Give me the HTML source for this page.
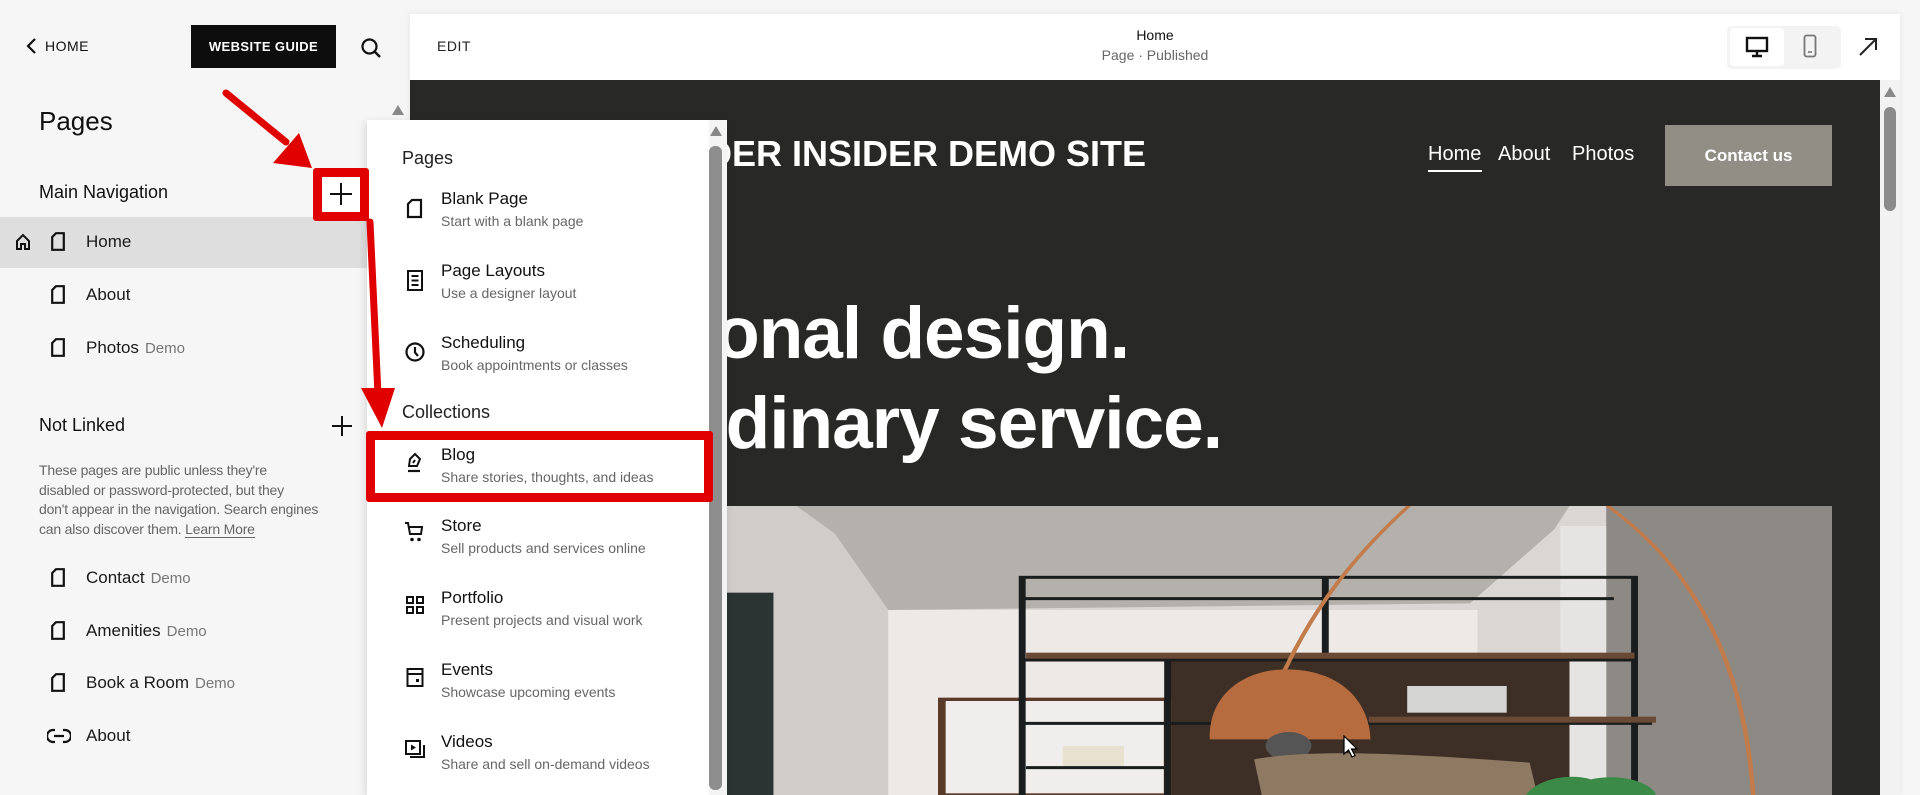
<!DOCTYPE html>
<html><head><meta charset="utf-8">
<style>
*{margin:0;padding:0;box-sizing:border-box}
body{width:1920px;height:795px;overflow:hidden;background:#f6f6f6;font-family:"Liberation Sans",sans-serif;position:relative;color:#111}
.a{position:absolute;white-space:nowrap}
.side-t{font-size:17px;color:#1a1a1a}
.demo{font-size:15px;color:#777;margin-left:6px}
.pg{position:absolute;width:14px;height:19px}
.mt{font-size:17px;color:#111}
.md{font-size:14px;color:#666;margin-top:4px}
.mi{position:absolute;left:441px}
.ic{position:absolute;left:404px;width:22px;height:22px}
</style></head><body>

<!-- sidebar -->
<svg class="a" style="left:25px;top:37px" width="12" height="18" viewBox="0 0 12 18"><path d="M10 2 L3 9 L10 16" fill="none" stroke="#111" stroke-width="2.2"/></svg>
<div class="a" style="left:45px;top:38px;font-size:14px;letter-spacing:.5px;color:#111">HOME</div>
<div class="a" style="left:191px;top:25px;width:145px;height:43px;background:#0d0d0d;color:#fff;font-size:13px;font-weight:bold;letter-spacing:.4px;line-height:43px;text-align:center">WEBSITE GUIDE</div>
<svg class="a" style="left:360px;top:37px" width="22" height="22" viewBox="0 0 22 22"><circle cx="9.5" cy="9.5" r="7" fill="none" stroke="#111" stroke-width="2.2"/><path d="M14.5 14.5 L20 20" stroke="#111" stroke-width="2.4"/></svg>
<div class="a" style="left:39px;top:106px;font-size:26px;color:#111">Pages</div>
<div class="a" style="left:39px;top:182px;font-size:18px;color:#111">Main Navigation</div>
<div class="a" style="left:0;top:217px;width:370px;height:51px;background:#dedede"></div>
<svg class="a" style="left:15px;top:233px" width="16" height="18" viewBox="0 0 16 18"><path d="M2 8 L8 2 L14 8 V16 H10 V11 H6 V16 H2 Z" fill="none" stroke="#111" stroke-width="2"/></svg>

<svg class="pg" style="left:51px;top:232px" viewBox="0 0 14 19"><path d="M1.2 5 L5 1.2 H12.8 V17.8 H1.2 Z" fill="none" stroke="#111" stroke-width="2.2"/></svg>
<div class="a side-t" style="left:86px;top:232px">Home</div>
<svg class="pg" style="left:51px;top:285px" viewBox="0 0 14 19"><path d="M1.2 5 L5 1.2 H12.8 V17.8 H1.2 Z" fill="none" stroke="#111" stroke-width="2.2"/></svg>
<div class="a side-t" style="left:86px;top:285px">About</div>
<svg class="pg" style="left:51px;top:338px" viewBox="0 0 14 19"><path d="M1.2 5 L5 1.2 H12.8 V17.8 H1.2 Z" fill="none" stroke="#111" stroke-width="2.2"/></svg>
<div class="a side-t" style="left:86px;top:338px">Photos<span class="demo">Demo</span></div>

<div class="a" style="left:39px;top:415px;font-size:18px;color:#111">Not Linked</div>
<svg class="a" style="left:331px;top:415px" width="22" height="22" viewBox="0 0 22 22"><path d="M11 1V21M1 11H21" stroke="#111" stroke-width="2"/></svg>
<div class="a" style="left:39px;top:461px;font-size:14px;line-height:19.5px;color:#666;letter-spacing:-0.2px">These pages are public unless they're<br>disabled or password-protected, but they<br>don't appear in the navigation. Search engines<br>can also discover them. <span style="border-bottom:1px solid #666">Learn More</span></div>

<svg class="pg" style="left:51px;top:568px" viewBox="0 0 14 19"><path d="M1.2 5 L5 1.2 H12.8 V17.8 H1.2 Z" fill="none" stroke="#111" stroke-width="2.2"/></svg>
<div class="a side-t" style="left:86px;top:568px">Contact<span class="demo">Demo</span></div>
<svg class="pg" style="left:51px;top:621px" viewBox="0 0 14 19"><path d="M1.2 5 L5 1.2 H12.8 V17.8 H1.2 Z" fill="none" stroke="#111" stroke-width="2.2"/></svg>
<div class="a side-t" style="left:86px;top:621px">Amenities<span class="demo">Demo</span></div>
<svg class="pg" style="left:51px;top:673px" viewBox="0 0 14 19"><path d="M1.2 5 L5 1.2 H12.8 V17.8 H1.2 Z" fill="none" stroke="#111" stroke-width="2.2"/></svg>
<div class="a side-t" style="left:86px;top:673px">Book a Room<span class="demo">Demo</span></div>
<svg class="a" style="left:47px;top:727px" width="24" height="18" viewBox="0 0 24 18"><path d="M8 3 H6 A6 6 0 0 0 6 15 H8 M16 3 H18 A6 6 0 0 1 18 15 H16 M7 9 H17" fill="none" stroke="#111" stroke-width="2.2"/></svg>
<div class="a side-t" style="left:86px;top:726px">About</div>

<svg class="a" style="left:391px;top:104px" width="14" height="12" viewBox="0 0 14 12"><path d="M7 1 L13 11 H1 Z" fill="#888"/></svg>

<!-- preview panel -->
<div class="a" style="left:410px;top:14px;width:1490px;height:781px;background:#fff;box-shadow:0 0 6px rgba(0,0,0,.08)"></div>
<div class="a" style="left:437px;top:38px;font-size:14px;letter-spacing:.5px;color:#222">EDIT</div>
<div class="a" style="left:1055px;top:27px;width:200px;text-align:center;font-size:14px;color:#111">Home</div>
<div class="a" style="left:1055px;top:47px;width:200px;text-align:center;font-size:14px;color:#666">Page · Published</div>
<div class="a" style="left:1727px;top:26px;width:114px;height:43px;background:#f3f3f3;border-radius:5px"></div>
<div class="a" style="left:1730px;top:28px;width:54px;height:38px;background:#fff;border-radius:4px"></div>
<svg class="a" style="left:1745px;top:36px" width="24" height="22" viewBox="0 0 24 22"><rect x="2" y="2" width="20" height="13" fill="none" stroke="#111" stroke-width="2.4"/><path d="M12 15V19M7 20H17" stroke="#111" stroke-width="2.4"/></svg>
<svg class="a" style="left:1803px;top:34px" width="14" height="24" viewBox="0 0 14 24"><rect x="1.5" y="1.5" width="11" height="21" rx="2" fill="none" stroke="#777" stroke-width="1.8"/><path d="M5 18H9" stroke="#777" stroke-width="1.6"/></svg>
<svg class="a" style="left:1858px;top:37px" width="20" height="20" viewBox="0 0 20 20"><path d="M2 18 L18 2 M7 2 H18 V13" fill="none" stroke="#222" stroke-width="2"/></svg>

<div class="a" style="left:410px;top:80px;width:1470px;height:715px;background:#282826;overflow:hidden">
  <div class="a" style="right:734px;top:53px;font-size:36px;font-weight:bold;color:#fff">SPLENDER INSIDER DEMO SITE</div>
  <div class="a" style="left:1018px;top:63px;font-size:20px;color:#fff">Home</div>
  <div class="a" style="left:1018px;top:90px;width:54px;height:2px;background:#fff"></div>
  <div class="a" style="left:1088px;top:63px;font-size:20px;color:#fff">About</div>
  <div class="a" style="left:1162px;top:63px;font-size:20px;color:#fff">Photos</div>
  <div class="a" style="left:1255px;top:45px;width:167px;height:61px;background:#918e86;color:#fff;font-weight:bold;font-size:17px;text-align:center;line-height:61px">Contact us</div>
  <div class="a" style="right:751px;top:212px;font-size:73px;font-weight:bold;color:#fff;letter-spacing:-1px">Exceptional design.</div>
  <div class="a" style="right:658px;top:302px;font-size:73px;font-weight:bold;color:#fff;letter-spacing:-1px">Extraordinary service.</div>
  <svg class="a" style="left:316px;top:426px" width="1106" height="289" viewBox="0 0 1445 867" preserveAspectRatio="none">
    <rect width="1445" height="867" fill="#d9d6d3"/>
    <rect x="0" y="0" width="212" height="867" fill="#cfccc9"/>
    <rect x="0" y="260" width="62" height="607" fill="#2b3433"/>
    <polygon points="92,0 1102,0 1082,70 972,292 212,312 142,82" fill="#b4b0ab"/>
    <rect x="212" y="312" width="770" height="555" fill="#ece9e6"/>
    <rect x="1150" y="0" width="295" height="867" fill="#8d8985"/>
    <rect x="1090" y="60" width="60" height="807" fill="#e6e4e2"/>
    <rect x="577" y="462" width="525" height="405" fill="#3e2f26"/>
    <rect x="282" y="580" width="295" height="287" fill="#f0eeec" stroke="#5a3b2a" stroke-width="10"/>
    <g fill="none" stroke="#1a1d1d" stroke-width="9">
      <rect x="387" y="214" width="800" height="700"/>
      <path d="M387 278 H1160 M783 214 V462 M387 462 H1187 M387 652 H1210 M577 462 V867 M392 785 H577"/>
    </g>
    <rect x="392" y="440" width="795" height="18" fill="#6b4a35"/>
    <rect x="840" y="632" width="375" height="18" fill="#6b4a35"/>
    <rect x="890" y="540" width="130" height="80" fill="#d5d5d3"/>
    <path d="M892 0 C820 150 770 300 730 492" fill="none" stroke="#c27b4b" stroke-width="6"/>
    <path d="M1152 0 C1260 180 1330 450 1342 867" fill="none" stroke="#c27b4b" stroke-width="6"/>
    <path d="M632 700 C630 560 680 490 732 490 C800 490 840 580 842 700 Z" fill="#b66c3f"/>
    <ellipse cx="735" cy="720" rx="30" ry="42" fill="#555"/>
    <path d="M690 760 C760 730 880 740 1050 770 L1060 867 H700 Z" fill="#8e7a63"/>
    <path d="M1045 867 C1060 820 1100 800 1130 820 C1170 800 1210 830 1215 867 Z" fill="#3c8a48"/>
    <rect x="440" y="720" width="80" height="60" fill="#e8e1cf"/>
  </svg>
</div>
<!-- main scrollbar -->
<div class="a" style="left:1880px;top:80px;width:20px;height:715px;background:#f2f2f2"></div>
<svg class="a" style="left:1883px;top:86px" width="14" height="12" viewBox="0 0 14 12"><path d="M7 1 L13 11 H1 Z" fill="#888"/></svg>
<div class="a" style="left:1884px;top:107px;width:12px;height:104px;background:#8b8b8b;border-radius:6px"></div>

<!-- dropdown -->
<div class="a" style="left:367px;top:120px;width:360px;height:675px;background:#fff;box-shadow:-2px 2px 8px rgba(0,0,0,.12)"></div>
<div class="a" style="left:709px;top:120px;width:18px;height:675px;background:#f4f4f4"></div>
<svg class="a" style="left:709px;top:125px" width="14" height="12" viewBox="0 0 14 12"><path d="M7 1 L13 11 H1 Z" fill="#888"/></svg>
<div class="a" style="left:709px;top:146px;width:13px;height:644px;background:#8e8e8e;border-radius:6px"></div>
<div class="a" style="left:402px;top:148px;font-size:18px;color:#222">Pages</div>
<div class="a" style="left:402px;top:402px;font-size:18px;color:#222">Collections</div>

<svg class="ic" style="top:197px" viewBox="0 0 22 22"><path d="M4 7 L8 3 H17 V20 H4 Z" fill="none" stroke="#111" stroke-width="2.2"/></svg>
<div class="mi" style="top:189px"><div class="mt">Blank Page</div><div class="md">Start with a blank page</div></div>
<svg class="ic" style="top:269px" viewBox="0 0 22 22"><rect x="4" y="2" width="14" height="19" fill="none" stroke="#111" stroke-width="2"/><path d="M7.5 7H14.5M7.5 11.5H14.5M7.5 16H14.5" stroke="#111" stroke-width="2"/></svg>
<div class="mi" style="top:261px"><div class="mt">Page Layouts</div><div class="md">Use a designer layout</div></div>
<svg class="ic" style="top:341px" viewBox="0 0 22 22"><circle cx="11" cy="11" r="8.5" fill="none" stroke="#111" stroke-width="2.2"/><path d="M11 6V11.5L14 15" fill="none" stroke="#111" stroke-width="2.2"/></svg>
<div class="mi" style="top:333px"><div class="mt">Scheduling</div><div class="md">Book appointments or classes</div></div>
<svg class="ic" style="top:451px" viewBox="0 0 22 22"><path d="M5 15 L6 8 L11 3 L16 8 L13 15 Z M9 12 L11 9" fill="none" stroke="#111" stroke-width="2"/><path d="M4 20H16" stroke="#111" stroke-width="2.2"/></svg>
<div class="mi" style="top:445px"><div class="mt">Blog</div><div class="md">Share stories, thoughts, and ideas</div></div>
<svg class="ic" style="top:521px" viewBox="0 0 22 22"><path d="M1 2 H4 L6 13 H17 L18 6 H5" fill="none" stroke="#111" stroke-width="2"/><circle cx="8" cy="18.5" r="1.8" fill="#111"/><circle cx="15" cy="18.5" r="1.8" fill="#111"/></svg>
<div class="mi" style="top:516px"><div class="mt">Store</div><div class="md">Sell products and services online</div></div>
<svg class="ic" style="top:594px" viewBox="0 0 22 22"><g fill="none" stroke="#111" stroke-width="2"><rect x="3" y="3" width="6" height="6"/><rect x="13" y="3" width="6" height="6"/><rect x="3" y="13" width="6" height="6"/><rect x="13" y="13" width="6" height="6"/></g></svg>
<div class="mi" style="top:588px"><div class="mt">Portfolio</div><div class="md">Present projects and visual work</div></div>
<svg class="ic" style="top:666px" viewBox="0 0 22 22"><rect x="3.5" y="3" width="15" height="17" fill="none" stroke="#111" stroke-width="2"/><path d="M3.5 8H18.5" stroke="#111" stroke-width="2"/><rect x="12" y="13" width="3" height="3" fill="#111"/></svg>
<div class="mi" style="top:660px"><div class="mt">Events</div><div class="md">Showcase upcoming events</div></div>
<svg class="ic" style="top:738px" viewBox="0 0 22 22"><rect x="2" y="3" width="14" height="13" fill="none" stroke="#111" stroke-width="2"/><path d="M6 19H20V7" fill="none" stroke="#111" stroke-width="2"/><path d="M7 6.5L12 9.5L7 12.5Z" fill="#111"/></svg>
<div class="mi" style="top:732px"><div class="mt">Videos</div><div class="md">Share and sell on-demand videos</div></div>

<!-- red boxes -->
<div class="a" style="left:366px;top:431px;width:347px;height:71px;border:9px solid #e00000;border-radius:3px"></div>
<div class="a" style="left:313px;top:168px;width:56px;height:53px;border:9px solid #e00000;border-radius:3px;background:#fff"></div>
<svg class="a" style="left:328px;top:181px" width="26" height="26" viewBox="0 0 26 26"><path d="M13 2V24M2 13H24" stroke="#111" stroke-width="2"/></svg>

<!-- arrows -->
<svg class="a" style="left:0;top:0" width="800" height="795">
  <path d="M226 93 L286 142" stroke="#e00000" stroke-width="7" stroke-linecap="round"/>
  <polygon points="312,168 273,163 299,133" fill="#e00000"/>
  <path d="M370 222 L378 395" stroke="#e00000" stroke-width="7" stroke-linecap="round"/>
  <polygon points="382,428 361,388 395,388" fill="#e00000"/>
</svg>

<!-- cursor -->
<svg class="a" style="left:1343px;top:735px" width="16" height="24" viewBox="0 0 16 24"><path d="M1 1 V19 L5.5 15 L9 22 L12 20.5 L8.5 14 H14 Z" fill="#fff" stroke="#000" stroke-width="1.2"/></svg>
</body></html>
